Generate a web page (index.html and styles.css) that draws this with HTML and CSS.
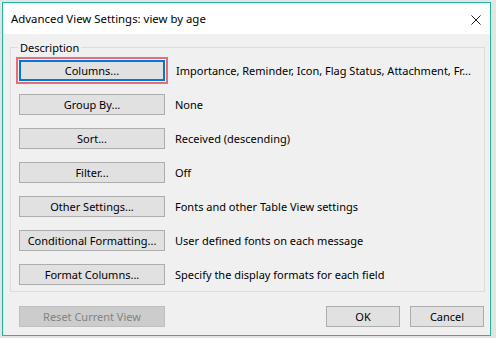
FILE: index.html
```html
<!DOCTYPE html>
<html lang="en">

<head>
    <meta charset="UTF-8">
    <title>Advanced View Settings: view by age</title>
    <link rel="stylesheet" href="styles.css">
</head>

<body>

    <!-- Dialog window -->
    <div class="dialog">
        <div class="title-bar">
            <span class="title">Advanced View Settings: view by age</span>
            <span class="close">
                <svg width="10" height="10" viewBox="0 0 10 10">
                    <path d="M0.5 0.5 L9.5 9.5 M9.5 0.5 L0.5 9.5" stroke="#1a1a1a" stroke-width="1" fill="none" />
                </svg>
            </span>
        </div>

        <div class="content">
            <fieldset class="group">
                <legend>Description</legend>

                <div class="row">
                    <span class="focus-ring"><button class="btn btn-focus">Columns...</button></span>
                    <span class="desc">Importance, Reminder, Icon, Flag Status, Attachment, Fr...</span>
                </div>
                <div class="row">
                    <button class="btn">Group By...</button>
                    <span class="desc">None</span>
                </div>
                <div class="row">
                    <button class="btn">Sort...</button>
                    <span class="desc">Received (descending)</span>
                </div>
                <div class="row">
                    <button class="btn">Filter...</button>
                    <span class="desc">Off</span>
                </div>
                <div class="row">
                    <button class="btn">Other Settings...</button>
                    <span class="desc">Fonts and other Table View settings</span>
                </div>
                <div class="row">
                    <button class="btn">Conditional Formatting...</button>
                    <span class="desc">User defined fonts on each message</span>
                </div>
                <div class="row">
                    <button class="btn">Format Columns...</button>
                    <span class="desc">Specify the display formats for each field</span>
                </div>
            </fieldset>

            <!-- Bottom buttons -->
            <div class="footer">
                <button class="btn" disabled>Reset Current View</button>
                <div class="footer-right">
                    <button class="btn btn-small">OK</button>
                    <button class="btn btn-small">Cancel</button>
                </div>
            </div>
        </div>
    </div>

</body>

</html>
```

FILE: styles.css
```css
body {
    margin: 0;
    padding: 0;
    background-color: #e4e4e4;
    font-family: 'Noto Sans', sans-serif;
    font-size: 11px;
    color: #000;
}

/* Dialog frame */
.dialog {
    box-sizing: border-box;
    width: 489px;
    height: 334px;
    margin: 2px 0 0 2px;
    border: 1px solid #1fb99b;
    background-color: #f0f0f0;
    display: flex;
    flex-direction: column;
}

.title-bar {
    height: 31px;
    background-color: #fff;
    display: flex;
    align-items: center;
    justify-content: space-between;
    padding: 0 9px 0 8px;
}

.title {
    color: #000;
    font-size: 11.4px;
}

.close {
    display: flex;
    margin-top: 2px;
}

/* Main content */
.content {
    padding: 6px 5px 0 7px;
}

.group {
    margin: 0;
    width: 475px;
    box-sizing: border-box;
    border: 1px solid #dcdcdc;
    padding: 5px 8px 6px 8px;
}

.group legend {
    padding: 0 2px;
    margin-left: -1px;
    line-height: 15px;
}

.row {
    display: flex;
    align-items: center;
    height: 21px;
    margin-bottom: 13px;
}

.row:last-child {
    margin-bottom: 0;
}

.desc {
    margin-left: 10px;
    white-space: nowrap;
}

.btn {
    box-sizing: border-box;
    width: 146px;
    height: 21px;
    padding: 0;
    border: 1px solid #adadad;
    background-color: #e1e1e1;
    font-family: 'Noto Sans', sans-serif;
    font-size: 11px;
    color: #000;
}

.btn:disabled {
    background-color: #cccccc;
    border-color: #bfbfbf;
    color: #838383;
}

.btn-small {
    width: 74px;
}

/* Keyboard focus on the first button */
.focus-ring {
    display: flex;
    margin: -4px -2px -3px -3px;
    border: 2px solid #e86b78;
    padding: 1px;
}

.btn-focus {
    border: 2px solid #0078d7;
}

.footer {
    display: flex;
    justify-content: space-between;
    margin-top: 14px;
    padding-left: 9px;
    padding-right: 1px;
}

.footer-right {
    display: flex;
    gap: 10px;
}
```
